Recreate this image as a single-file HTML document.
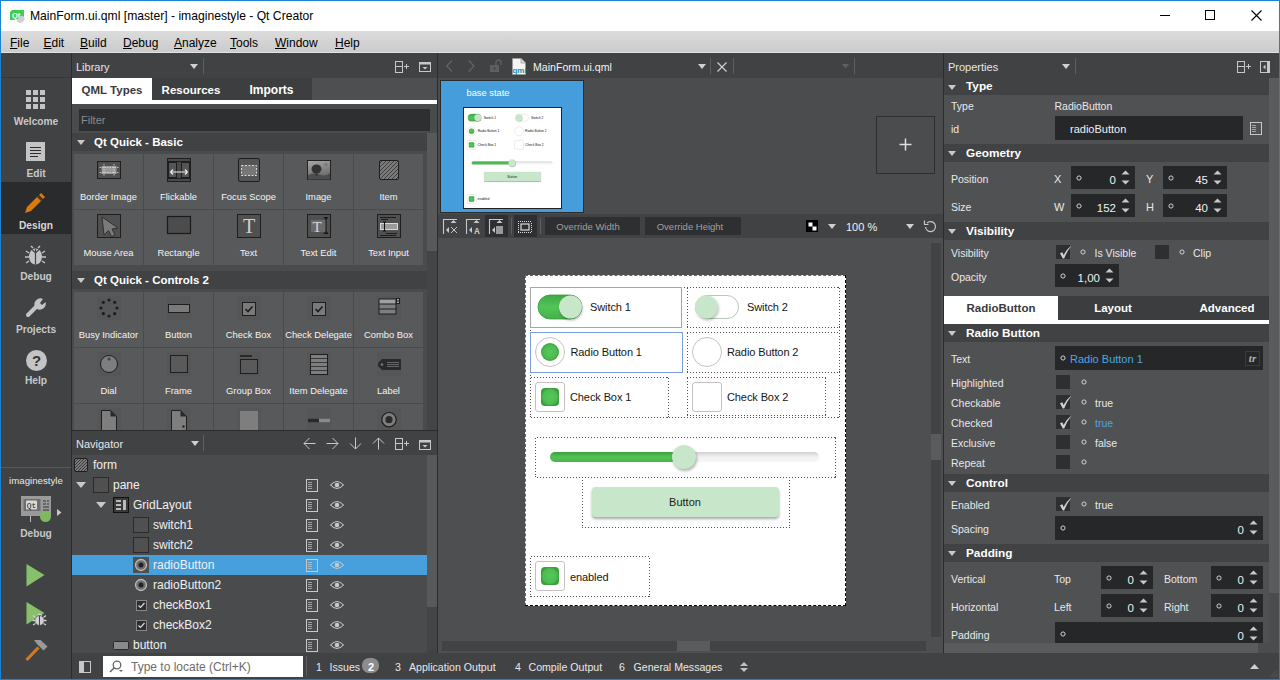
<!DOCTYPE html><html><head><meta charset="utf-8"><style>
*{margin:0;padding:0;box-sizing:border-box}
html,body{width:1280px;height:680px;overflow:hidden;background:#1883d7;font-family:"Liberation Sans",sans-serif;position:relative}
.a{position:absolute}
.t{position:absolute;white-space:nowrap;line-height:1;font-size:11px;color:#e6e6e6}
svg{position:absolute;overflow:visible}
</style></head><body><div class="a" style="left:1px;top:1px;width:1278px;height:30px;background:#fff"></div>
<div class="a" style="left:1px;top:31px;width:1278px;height:21px;background:linear-gradient(#dcdcdc,#cbcbcb)"></div>
<div class="a" style="left:1px;top:52px;width:1278px;height:1px;background:#e2e2e2"></div>
<div class="a" style="left:1px;top:53px;width:1278px;height:626px;background:#404244"></div>
<svg style="left:10px;top:9px;" width="16" height="15" viewBox="0 0 16 15"><path d="M0 3 L2 1 H14 V9 L12 11 H0 Z" fill="#41cd52"/><text x="2" y="9" font-size="7.5" font-family="Liberation Sans" fill="#fff" font-weight="bold">Qt</text><ellipse cx="11" cy="10.5" rx="4" ry="3" fill="#d0d0d0" transform="rotate(-45 11 10.5)"/></svg>
<div class="t" style="left:30px;top:9.72px;font-size:12.15px;color:#000">MainForm.ui.qml [master] - imaginestyle - Qt Creator</div>
<svg style="left:1160px;top:10px;" width="11" height="11" viewBox="0 0 11 11"><path d="M0 5.5 H10" stroke="#000" stroke-width="1"/></svg>
<svg style="left:1205px;top:10px;" width="11" height="11" viewBox="0 0 11 11"><rect x="0.5" y="0.5" width="9" height="9" fill="none" stroke="#000" stroke-width="1"/></svg>
<svg style="left:1251px;top:10px;" width="11" height="11" viewBox="0 0 11 11"><path d="M0.5 0.5 L10.5 10.5 M10.5 0.5 L0.5 10.5" stroke="#000" stroke-width="1.1"/></svg>
<div class="t" style="left:10px;top:36.84px;font-size:12px;color:#000"><u style="text-underline-offset:1px">F</u>ile</div>
<div class="t" style="left:43.5px;top:36.84px;font-size:12px;color:#000"><u style="text-underline-offset:1px">E</u>dit</div>
<div class="t" style="left:80px;top:36.84px;font-size:12px;color:#000"><u style="text-underline-offset:1px">B</u>uild</div>
<div class="t" style="left:123px;top:36.84px;font-size:12px;color:#000"><u style="text-underline-offset:1px">D</u>ebug</div>
<div class="t" style="left:174px;top:36.84px;font-size:12px;color:#000"><u style="text-underline-offset:1px">A</u>nalyze</div>
<div class="t" style="left:230px;top:36.84px;font-size:12px;color:#000"><u style="text-underline-offset:1px">T</u>ools</div>
<div class="t" style="left:275px;top:36.84px;font-size:12px;color:#000"><u style="text-underline-offset:1px">W</u>indow</div>
<div class="t" style="left:335px;top:36.84px;font-size:12px;color:#000"><u style="text-underline-offset:1px">H</u>elp</div>
<div class="a" style="left:1px;top:77px;width:70px;height:1px;background:#353638"></div>
<div class="a" style="left:71px;top:53px;width:1px;height:626px;background:#2b2c2e"></div>
<div class="a" style="left:1px;top:182px;width:70px;height:52px;background:#2a2b2d"></div>
<svg style="left:26px;top:90px;" width="19" height="19" viewBox="0 0 19 19"><rect x="0" y="0" width="5" height="5" fill="#c4c4c4"/><rect x="0" y="7" width="5" height="5" fill="#c4c4c4"/><rect x="0" y="14" width="5" height="5" fill="#c4c4c4"/><rect x="7" y="0" width="5" height="5" fill="#c4c4c4"/><rect x="7" y="7" width="5" height="5" fill="#c4c4c4"/><rect x="7" y="14" width="5" height="5" fill="#c4c4c4"/><rect x="14" y="0" width="5" height="5" fill="#c4c4c4"/><rect x="14" y="7" width="5" height="5" fill="#c4c4c4"/><rect x="14" y="14" width="5" height="5" fill="#c4c4c4"/></svg>
<div class="t" style="left:-164px;width:400px;text-align:center;top:116.87px;font-size:10.2px;font-weight:bold;color:#c8c8c8">Welcome</div>
<svg style="left:26px;top:142px;" width="19" height="19" viewBox="0 0 19 19"><rect width="19" height="19" fill="#c4c4c4"/><path d="M4 5.5H15M4 8.5H15M4 11.5H15M4 14.5H12" stroke="#2e2e2e" stroke-width="1"/></svg>
<div class="t" style="left:-164px;width:400px;text-align:center;top:169.37px;font-size:10.2px;font-weight:bold;color:#c8c8c8">Edit</div>
<svg style="left:24px;top:193px;" width="22" height="22" viewBox="0 0 22 22"><path d="M1 20 L3 14 L14 3 L18 7 L7 18 Z" fill="#d97b0e"/><path d="M15 2 L17 0 L21 4 L19 6 Z" fill="#d97b0e"/><path d="M13.5 3.5 L17.5 7.5" stroke="#2a2b2d" stroke-width="1.2"/></svg>
<div class="t" style="left:-164px;width:400px;text-align:center;top:220.87px;font-size:10.2px;font-weight:bold;color:#d8d8d8">Design</div>
<svg style="left:25px;top:245px;" width="21" height="20" viewBox="0 0 21 20"><ellipse cx="10.5" cy="11.5" rx="6.5" ry="8" fill="#c4c4c4"/><path d="M10.5 4 V19.5" stroke="#404244" stroke-width="1.2"/><path d="M7 4.5 L10.5 8 L14 4.5" stroke="#404244" stroke-width="1.2" fill="none"/><path d="M1 6 L4 8 M0 12 H4 M1 18 L4 16 M20 6 L17 8 M21 12 H17 M20 18 L17 16 M6 1 L8 3 M15 1 L13 3" stroke="#c4c4c4" stroke-width="1.4"/></svg>
<div class="t" style="left:-164px;width:400px;text-align:center;top:271.87px;font-size:10.2px;font-weight:bold;color:#c8c8c8">Debug</div>
<svg style="left:26px;top:298px;" width="20" height="19" viewBox="0 0 20 19"><path d="M2 17 L11 8" stroke="#c4c4c4" stroke-width="4" stroke-linecap="round"/><path d="M9 9 A6 6 0 0 1 17 1 L14 5 L16 7 L19.5 4 A6 6 0 0 1 11 11 Z" fill="#c4c4c4"/></svg>
<div class="t" style="left:-164px;width:400px;text-align:center;top:325.37px;font-size:10.2px;font-weight:bold;color:#c8c8c8">Projects</div>
<svg style="left:26px;top:350px;" width="21" height="21" viewBox="0 0 21 21"><circle cx="10.5" cy="10.5" r="10.5" fill="#c4c4c4"/><text x="10.5" y="16" text-anchor="middle" font-size="15" font-weight="bold" font-family="Liberation Sans" fill="#333">?</text></svg>
<div class="t" style="left:-164px;width:400px;text-align:center;top:375.87px;font-size:10.2px;font-weight:bold;color:#c8c8c8">Help</div>
<div class="a" style="left:1px;top:467px;width:70px;height:1px;background:#58595b"></div>
<div class="t" style="left:-164px;width:400px;text-align:center;top:475.79px;font-size:9.7px;color:#e8e8e8">imaginestyle</div>
<svg style="left:21px;top:496px;" width="31" height="26" viewBox="0 0 31 26"><rect x="0" y="0" width="30" height="20" fill="#9a9a9a"/><rect x="2.5" y="3" width="17" height="12" fill="#6e6e6e"/><rect x="5" y="4.5" width="11" height="9" fill="#d8d8d8" rx="1"/><text x="10.5" y="12" text-anchor="middle" font-size="8" font-family="Liberation Mono" fill="#222">Qt</text><path d="M22 5h3M26 5h2M22 8h3M26 8h2M22 11h6M22 14h6" stroke="#555" stroke-width="1.5"/><path d="M9.5 20 V26" stroke="#bbb" stroke-width="1"/><circle cx="24.5" cy="20.5" r="5.5" fill="#7fb860"/></svg>
<svg style="left:57px;top:509px;" width="5" height="7" viewBox="0 0 5 7"><path d="M0 0 L4.5 3.5 L0 7Z" fill="#c8c8c8"/></svg>
<div class="t" style="left:-164px;width:400px;text-align:center;top:528.87px;font-size:10.2px;font-weight:bold;color:#c8c8c8">Debug</div>
<svg style="left:26px;top:564px;" width="19" height="23" viewBox="0 0 19 23"><path d="M0.5 0 L18.5 11 L0.5 22.5Z" fill="#87c06a"/></svg>
<svg style="left:26px;top:602px;" width="22" height="24" viewBox="0 0 22 24"><path d="M0.5 0 L18.5 11 L0.5 22.5Z" fill="#87c06a"/><path d="M13.5 11.5 a3 3 0 0 1 3 2.5 h-6 a3 3 0 0 1 3 -2.5Z" fill="#d0d0d0"/><ellipse cx="13.5" cy="18.5" rx="4.8" ry="5" fill="#d0d0d0" stroke="#404244" stroke-width="0.8"/><path d="M13.5 14 V23.5" stroke="#404244" stroke-width="1"/><path d="M7 13.5 L9.5 15.5 M6.5 18.5 H9 M7 23 L9.5 21.5 M20 13.5 L17.5 15.5 M20.5 18.5 H18 M20 23 L17.5 21.5" stroke="#d0d0d0" stroke-width="1.3"/></svg>
<svg style="left:25px;top:639px;" width="24" height="23" viewBox="0 0 24 23"><path d="M1.5 21 L13.5 8.5" stroke="#d47a1e" stroke-width="3.2"/><path d="M9 1 L15.5 1 L22.5 7.5 L18.5 11.5 L12 5Z" fill="#9a9a9a"/></svg>
<div class="a" style="left:72px;top:53px;width:365px;height:25px;background:#404244"></div>
<div class="t" style="left:76px;top:61.69px;font-size:11px;">Library</div>
<svg style="left:190px;top:64px;" width="8" height="5" viewBox="0 0 8 5"><path d="M0 0H8L4 5Z" fill="#d0d0d0"/></svg>
<div class="a" style="left:203px;top:58px;width:1px;height:16px;background:#5e5f61"></div>
<svg style="left:395px;top:61px;" width="15" height="12" viewBox="0 0 15 12"><rect x="0.5" y="0.5" width="7" height="11" fill="none" stroke="#c8c8c8"/><path d="M0.5 5.5H7.5M9 5.5H14M11.5 3V8" stroke="#c8c8c8"/></svg>
<svg style="left:419px;top:62px;" width="12" height="10" viewBox="0 0 12 10"><rect x="0.5" y="0.5" width="11" height="9" fill="none" stroke="#c8c8c8"/><rect x="0" y="0" width="12" height="2.5" fill="#c8c8c8"/><path d="M3.5 5H8.5L6 7.5Z" fill="#c8c8c8"/></svg>
<div class="a" style="left:72px;top:78px;width:365px;height:22px;background:#3d3e40"></div>
<div class="a" style="left:312px;top:78px;width:125px;height:22px;background:#4e4f51"></div>
<div class="a" style="left:72px;top:78px;width:80px;height:22px;background:#fff"></div>
<div class="a" style="left:72px;top:100px;width:365px;height:4px;background:#fff"></div>
<div class="a" style="left:72px;top:104px;width:365px;height:327px;background:#4a4b4d"></div>
<div class="t" style="left:-88px;width:400px;text-align:center;top:84.77px;font-size:11.5px;font-weight:bold;color:#3a3a3a">QML Types</div>
<div class="t" style="left:-9px;width:400px;text-align:center;top:84.77px;font-size:11.5px;font-weight:bold;color:#fff">Resources</div>
<div class="t" style="left:71.5px;width:400px;text-align:center;top:84.34px;font-size:12px;font-weight:bold;color:#fff">Imports</div>
<div class="a" style="left:79px;top:109px;width:351px;height:22px;background:#2e2f30"></div>
<div class="t" style="left:81px;top:114.69px;font-size:11px;color:#8c8c8c">Filter</div>
<div class="a" style="left:427px;top:133px;width:10px;height:297px;background:#444547"></div>
<div class="a" style="left:427px;top:133px;width:10px;height:118px;background:#59595b"></div>
<div class="a" style="left:437px;top:53px;width:1px;height:600px;background:#2b2c2e"></div>
<div class="a" style="left:72px;top:133px;width:355px;height:18px;background:#404244"></div>
<svg style="left:77px;top:140px;" width="8" height="5" viewBox="0 0 8 5"><path d="M0 0H8L4 5Z" fill="#c8c8c8"/></svg>
<div class="t" style="left:94px;top:136.77px;font-size:11.5px;font-weight:bold;color:#fff">Qt Quick - Basic</div>
<div class="a" style="left:72px;top:271px;width:355px;height:18px;background:#404244"></div>
<svg style="left:77px;top:278px;" width="8" height="5" viewBox="0 0 8 5"><path d="M0 0H8L4 5Z" fill="#c8c8c8"/></svg>
<div class="t" style="left:94px;top:274.77px;font-size:11.5px;font-weight:bold;color:#fff">Qt Quick - Controls 2</div>
<div class="a" style="left:74px;top:154px;width:69px;height:55px;background:#58595b"></div>
<svg style="left:97px;top:161px;" width="24" height="18" viewBox="0 0 24 18"><rect x="0.5" y="0.5" width="23" height="17" fill="#505050" stroke="#1e1e1e"/><rect x="4.5" y="5" width="15" height="8" fill="#9a9a9a"/><path d="M7 3V15M17 3V15M2.5 6.5H21.5M2.5 11.5H21.5" stroke="#d8d8d8" stroke-width="0.8" stroke-dasharray="1.5 1"/></svg>
<div class="t" style="left:-91.5px;width:400px;text-align:center;top:191.54px;font-size:9.4px;color:#f4f4f4">Border Image</div>
<div class="a" style="left:144px;top:154px;width:69px;height:55px;background:#58595b"></div>
<svg style="left:167px;top:158px;" width="24" height="24" viewBox="0 0 24 24"><rect x="0.5" y="0.5" width="23" height="23" fill="#4a4a4a" stroke="#1e1e1e"/><path d="M0.5 3.5H23.5M0.5 20.5H23.5" stroke="#1e1e1e"/><rect x="1.5" y="4.5" width="8" height="15" fill="#555" stroke="#1e1e1e"/><rect x="14.5" y="4.5" width="8" height="15" fill="#555" stroke="#1e1e1e"/><path d="M3.5 14H20.5M3.5 14L6 11.5M3.5 14L6 16.5M20.5 14L18 11.5M20.5 14L18 16.5" stroke="#eee" stroke-width="1.2" fill="none"/></svg>
<div class="t" style="left:-21.5px;width:400px;text-align:center;top:191.54px;font-size:9.4px;color:#f4f4f4">Flickable</div>
<div class="a" style="left:214px;top:154px;width:69px;height:55px;background:#58595b"></div>
<svg style="left:238px;top:158px;" width="22" height="24" viewBox="0 0 22 24"><rect x="0.5" y="0.5" width="21" height="23" rx="1.5" fill="#555" stroke="#1e1e1e"/><rect x="3.5" y="7.5" width="15" height="10" fill="#777" stroke="#ddd" stroke-dasharray="2 1.5"/></svg>
<div class="t" style="left:48.5px;width:400px;text-align:center;top:191.54px;font-size:9.4px;color:#f4f4f4">Focus Scope</div>
<div class="a" style="left:284px;top:154px;width:69px;height:55px;background:#58595b"></div>
<svg style="left:307px;top:160px;" width="24" height="20" viewBox="0 0 24 20"><defs><linearGradient id="gimg" x1="0" y1="0" x2="0.3" y2="1"><stop offset="0" stop-color="#a8a8a8"/><stop offset="1" stop-color="#6a6a6a"/></linearGradient></defs><rect x="0.5" y="0.5" width="23" height="19" fill="url(#gimg)" stroke="#222"/><path d="M1 15 Q7 12 13 14.5 T23 13 V19.5 H1Z" fill="#4e4e4e"/><ellipse cx="9.5" cy="9" rx="5" ry="4.5" fill="#333"/><path d="M9.5 10V16" stroke="#333" stroke-width="1.5"/><circle cx="19" cy="4.5" r="1.6" fill="#777"/></svg>
<div class="t" style="left:118.5px;width:400px;text-align:center;top:191.54px;font-size:9.4px;color:#f4f4f4">Image</div>
<div class="a" style="left:354px;top:154px;width:69px;height:55px;background:#58595b"></div>
<svg style="left:379px;top:160px;" width="20" height="20" viewBox="0 0 20 20"><defs><clipPath id="ci"><rect x="1" y="1" width="18" height="18"/></clipPath></defs><rect x="0.5" y="0.5" width="19" height="19" rx="1.5" fill="#7a7a7a" stroke="#1e1e1e"/><g clip-path="url(#ci)"><path d="M-16 20 L4 0" stroke="#3e3e3e" stroke-width="1"/><path d="M-12 20 L8 0" stroke="#3e3e3e" stroke-width="1"/><path d="M-8 20 L12 0" stroke="#3e3e3e" stroke-width="1"/><path d="M-4 20 L16 0" stroke="#3e3e3e" stroke-width="1"/><path d="M0 20 L20 0" stroke="#3e3e3e" stroke-width="1"/><path d="M4 20 L24 0" stroke="#3e3e3e" stroke-width="1"/><path d="M8 20 L28 0" stroke="#3e3e3e" stroke-width="1"/><path d="M12 20 L32 0" stroke="#3e3e3e" stroke-width="1"/><path d="M16 20 L36 0" stroke="#3e3e3e" stroke-width="1"/></g></svg>
<div class="t" style="left:188.5px;width:400px;text-align:center;top:191.54px;font-size:9.4px;color:#f4f4f4">Item</div>
<div class="a" style="left:74px;top:210px;width:69px;height:55px;background:#58595b"></div>
<svg style="left:97px;top:214px;" width="24" height="24" viewBox="0 0 24 24"><rect x="0.5" y="0.5" width="23" height="23" fill="#505050" stroke="#1e1e1e"/><path d="M5 3 L21 14 L15 15 L18 21 L14.5 22.5 L11.5 16.5 L7 21 Z" fill="#7a7a7a" stroke="#2a2a2a" stroke-width="0.9"/></svg>
<div class="t" style="left:-91.5px;width:400px;text-align:center;top:247.54px;font-size:9.4px;color:#f4f4f4">Mouse Area</div>
<div class="a" style="left:144px;top:210px;width:69px;height:55px;background:#58595b"></div>
<svg style="left:167px;top:216px;" width="24" height="18" viewBox="0 0 24 18"><rect x="0.5" y="0.5" width="23" height="17" fill="#4c4c4c" stroke="#1a1a1a" stroke-width="1.2"/></svg>
<div class="t" style="left:-21.5px;width:400px;text-align:center;top:247.54px;font-size:9.4px;color:#f4f4f4">Rectangle</div>
<div class="a" style="left:214px;top:210px;width:69px;height:55px;background:#58595b"></div>
<svg style="left:237px;top:214px;" width="24" height="24" viewBox="0 0 24 24"><rect x="0.5" y="0.5" width="23" height="23" fill="#505050" stroke="#1e1e1e"/><text x="12" y="19" text-anchor="middle" font-size="20" font-family="Liberation Serif" fill="#d0d0d0">T</text></svg>
<div class="t" style="left:48.5px;width:400px;text-align:center;top:247.54px;font-size:9.4px;color:#f4f4f4">Text</div>
<div class="a" style="left:284px;top:210px;width:69px;height:55px;background:#58595b"></div>
<svg style="left:307px;top:214px;" width="24" height="24" viewBox="0 0 24 24"><rect x="0.5" y="0.5" width="23" height="23" fill="#505050" stroke="#1e1e1e"/><rect x="4" y="6" width="15" height="12" fill="#6a6a6a"/><text x="10" y="17.5" text-anchor="middle" font-size="15" font-family="Liberation Serif" fill="#d8d8d8">T</text><path d="M17 3.5H21M19 3.5V19.5M17 19.5H21M17 3.5L19 5.5L21 3.5M17 19.5L19 17.5L21 19.5" stroke="#111" stroke-width="0.9" fill="none"/></svg>
<div class="t" style="left:118.5px;width:400px;text-align:center;top:247.54px;font-size:9.4px;color:#f4f4f4">Text Edit</div>
<div class="a" style="left:354px;top:210px;width:69px;height:55px;background:#58595b"></div>
<svg style="left:377px;top:214px;" width="24" height="24" viewBox="0 0 24 24"><rect x="0.5" y="0.5" width="23" height="23" fill="#505050" stroke="#1e1e1e"/><path d="M3 3.5H19M4 5.5H11M9 19.5H20M3 21.5H19" stroke="#1e1e1e"/><rect x="3.5" y="9.5" width="17" height="6" fill="#9a9a9a" stroke="#d8d8d8"/><path d="M7.5 8V17M6 8H9M6 17H9" stroke="#111" stroke-width="1"/></svg>
<div class="t" style="left:188.5px;width:400px;text-align:center;top:247.54px;font-size:9.4px;color:#f4f4f4">Text Input</div>
<div class="a" style="left:74px;top:292px;width:69px;height:55px;background:#58595b"></div>
<div class="a" style="left:97px;top:296px;width:24px;height:24px;background:#555658"></div>
<svg style="left:97px;top:296px;" width="24" height="24" viewBox="0 0 24 24"><circle cx="20.00" cy="12.00" r="1.6" fill="#1e1e1e"/><circle cx="17.66" cy="17.66" r="1.6" fill="#1e1e1e"/><circle cx="12.00" cy="20.00" r="1.6" fill="#1e1e1e"/><circle cx="6.34" cy="17.66" r="1.6" fill="#1e1e1e"/><circle cx="4.00" cy="12.00" r="1.6" fill="#1e1e1e"/><circle cx="6.34" cy="6.34" r="1.6" fill="#1e1e1e"/><circle cx="12.00" cy="4.00" r="1.6" fill="#1e1e1e"/><circle cx="17.66" cy="6.34" r="1.6" fill="#1e1e1e"/></svg>
<div class="t" style="left:-91.5px;width:400px;text-align:center;top:329.54px;font-size:9.4px;color:#f4f4f4">Busy Indicator</div>
<div class="a" style="left:144px;top:292px;width:69px;height:55px;background:#58595b"></div>
<div class="a" style="left:167px;top:296px;width:24px;height:24px;background:#555658"></div>
<svg style="left:167px;top:296px;" width="24" height="24" viewBox="0 0 24 24"><rect x="1.5" y="8.5" width="21" height="8" fill="#7a7a7a" stroke="#1e1e1e"/></svg>
<div class="t" style="left:-21.5px;width:400px;text-align:center;top:329.54px;font-size:9.4px;color:#f4f4f4">Button</div>
<div class="a" style="left:214px;top:292px;width:69px;height:55px;background:#58595b"></div>
<div class="a" style="left:237px;top:296px;width:24px;height:24px;background:#555658"></div>
<svg style="left:237px;top:296px;" width="24" height="24" viewBox="0 0 24 24"><rect x="5.5" y="6.5" width="13" height="13" fill="#7a7a7a" stroke="#1e1e1e"/><path d="M8.5 13 L11 15.5 L15.5 10.5" stroke="#1e1e1e" stroke-width="1.7" fill="none"/></svg>
<div class="t" style="left:48.5px;width:400px;text-align:center;top:329.54px;font-size:9.4px;color:#f4f4f4">Check Box</div>
<div class="a" style="left:284px;top:292px;width:69px;height:55px;background:#58595b"></div>
<div class="a" style="left:307px;top:296px;width:24px;height:24px;background:#555658"></div>
<svg style="left:307px;top:296px;" width="24" height="24" viewBox="0 0 24 24"><rect x="5.5" y="6.5" width="13" height="13" fill="#7a7a7a" stroke="#1e1e1e"/><path d="M8.5 13 L11 15.5 L15.5 10.5" stroke="#1e1e1e" stroke-width="1.7" fill="none"/></svg>
<div class="t" style="left:118.5px;width:400px;text-align:center;top:329.54px;font-size:9.4px;color:#f4f4f4">Check Delegate</div>
<div class="a" style="left:354px;top:292px;width:69px;height:55px;background:#58595b"></div>
<div class="a" style="left:377px;top:296px;width:24px;height:24px;background:#555658"></div>
<svg style="left:377px;top:296px;" width="24" height="24" viewBox="0 0 24 24"><rect x="1.5" y="2.5" width="18" height="16" fill="#1e1e1e"/><rect x="2.5" y="3.5" width="16" height="4" fill="#a0a0a0"/><rect x="2.5" y="8.5" width="16" height="4" fill="#7e7e7e"/><rect x="2.5" y="13.5" width="16" height="4" fill="#7e7e7e"/><rect x="19" y="2" width="4" height="6" fill="#1e1e1e"/><rect x="20" y="3" width="2" height="1.5" fill="#aaa"/><rect x="20" y="5.5" width="2" height="1.5" fill="#aaa"/></svg>
<div class="t" style="left:188.5px;width:400px;text-align:center;top:329.54px;font-size:9.4px;color:#f4f4f4">Combo Box</div>
<div class="a" style="left:74px;top:348px;width:69px;height:55px;background:#58595b"></div>
<div class="a" style="left:97px;top:352px;width:24px;height:24px;background:#555658"></div>
<svg style="left:97px;top:352px;" width="24" height="24" viewBox="0 0 24 24"><circle cx="12" cy="12" r="8.5" fill="#7e7e7e" stroke="#1e1e1e"/><circle cx="12" cy="7" r="1.6" fill="#444"/></svg>
<div class="t" style="left:-91.5px;width:400px;text-align:center;top:385.54px;font-size:9.4px;color:#f4f4f4">Dial</div>
<div class="a" style="left:144px;top:348px;width:69px;height:55px;background:#58595b"></div>
<div class="a" style="left:167px;top:352px;width:24px;height:24px;background:#555658"></div>
<svg style="left:167px;top:352px;" width="24" height="24" viewBox="0 0 24 24"><rect x="3.5" y="3.5" width="17" height="17" fill="#5a5a5a" stroke="#1e1e1e"/></svg>
<div class="t" style="left:-21.5px;width:400px;text-align:center;top:385.54px;font-size:9.4px;color:#f4f4f4">Frame</div>
<div class="a" style="left:214px;top:348px;width:69px;height:55px;background:#58595b"></div>
<div class="a" style="left:237px;top:352px;width:24px;height:24px;background:#555658"></div>
<svg style="left:237px;top:352px;" width="24" height="24" viewBox="0 0 24 24"><rect x="3" y="3" width="12" height="2" fill="#2a2a2a"/><rect x="3.5" y="7.5" width="17" height="14" fill="#5a5a5a" stroke="#1e1e1e"/></svg>
<div class="t" style="left:48.5px;width:400px;text-align:center;top:385.54px;font-size:9.4px;color:#f4f4f4">Group Box</div>
<div class="a" style="left:284px;top:348px;width:69px;height:55px;background:#58595b"></div>
<div class="a" style="left:307px;top:352px;width:24px;height:24px;background:#555658"></div>
<svg style="left:307px;top:352px;" width="24" height="24" viewBox="0 0 24 24"><rect x="3.5" y="2.5" width="17" height="20" fill="#7e7e7e" stroke="#1e1e1e"/><path d="M4 6.5H20M4 10.5H20M4 14.5H20M4 18.5H20" stroke="#3a3a3a" stroke-width="1"/></svg>
<div class="t" style="left:118.5px;width:400px;text-align:center;top:385.54px;font-size:9.4px;color:#f4f4f4">Item Delegate</div>
<div class="a" style="left:354px;top:348px;width:69px;height:55px;background:#58595b"></div>
<div class="a" style="left:377px;top:352px;width:24px;height:24px;background:#555658"></div>
<svg style="left:377px;top:352px;" width="24" height="24" viewBox="0 0 24 24"><path d="M5 7 H24 V18 H5 L1 14 V11Z" fill="#2a2a2a"/><circle cx="5" cy="12.5" r="1.3" fill="#777"/><path d="M10 10.5H22M10 12.5H22M10 14.5H22" stroke="#777" stroke-width="0.8"/></svg>
<div class="t" style="left:188.5px;width:400px;text-align:center;top:385.54px;font-size:9.4px;color:#f4f4f4">Label</div>
<div class="a" style="left:74px;top:404px;width:69px;height:26px;background:#58595b"></div>
<div class="a" style="left:97px;top:408px;width:24px;height:24px;background:#555658"></div>
<svg style="left:97px;top:408px;" width="24" height="24" viewBox="0 0 24 24"><path d="M4.5 2.5 H13.5 L19.5 8.5 V30 H4.5Z" fill="#7e7e7e" stroke="#1e1e1e"/><path d="M13.5 2 V8.5 H20Z" fill="#2a2a2a"/></svg>
<div class="a" style="left:144px;top:404px;width:69px;height:26px;background:#58595b"></div>
<div class="a" style="left:167px;top:408px;width:24px;height:24px;background:#555658"></div>
<svg style="left:167px;top:408px;" width="24" height="24" viewBox="0 0 24 24"><path d="M4.5 2.5 H13.5 L19.5 8.5 V30 H4.5Z" fill="#7e7e7e" stroke="#1e1e1e"/><path d="M13.5 2 V8.5 H20Z" fill="#2a2a2a"/><rect x="15.5" y="17.5" width="2" height="2" fill="#111"/></svg>
<div class="a" style="left:214px;top:404px;width:69px;height:26px;background:#58595b"></div>
<div class="a" style="left:237px;top:408px;width:24px;height:24px;background:#555658"></div>
<svg style="left:237px;top:408px;" width="24" height="24" viewBox="0 0 24 24"><rect x="3" y="3" width="18" height="19" fill="#7e7e7e"/></svg>
<div class="a" style="left:284px;top:404px;width:69px;height:26px;background:#58595b"></div>
<div class="a" style="left:307px;top:408px;width:24px;height:24px;background:#555658"></div>
<svg style="left:307px;top:408px;" width="24" height="24" viewBox="0 0 24 24"><rect x="1" y="10.8" width="11" height="3.4" fill="#2a2a2a"/><rect x="12" y="10.8" width="11" height="3.4" fill="#8a8a8a"/></svg>
<div class="a" style="left:354px;top:404px;width:69px;height:26px;background:#58595b"></div>
<div class="a" style="left:377px;top:408px;width:24px;height:24px;background:#555658"></div>
<svg style="left:377px;top:408px;" width="24" height="24" viewBox="0 0 24 24"><circle cx="12" cy="11.7" r="7.2" fill="#7e7e7e" stroke="#1e1e1e" stroke-width="1.2"/><circle cx="12" cy="11.7" r="3.6" fill="#2a2a2a"/></svg>
<div class="a" style="left:72px;top:430px;width:365px;height:1px;background:#2b2c2e"></div>
<div class="a" style="left:72px;top:431px;width:365px;height:24px;background:#404244"></div>
<div class="t" style="left:76px;top:438.69px;font-size:11px;">Navigator</div>
<svg style="left:191px;top:441px;" width="8" height="5" viewBox="0 0 8 5"><path d="M0 0H8L4 5Z" fill="#d0d0d0"/></svg>
<div class="a" style="left:203px;top:435px;width:1px;height:16px;background:#5e5f61"></div>
<svg style="left:303px;top:437px;" width="13" height="13" viewBox="0 0 13 13"><path d="M1 6.5H12.5M6.5 1L1 6.5L6.5 12" stroke="#c8c8c8" stroke-width="1" fill="none"/></svg>
<svg style="left:326px;top:437px;" width="13" height="13" viewBox="0 0 13 13"><path d="M0.5 6.5H12M6.5 1L12 6.5L6.5 12" stroke="#c8c8c8" stroke-width="1" fill="none"/></svg>
<svg style="left:349px;top:437px;" width="13" height="13" viewBox="0 0 13 13"><path d="M6.5 0.5V12M1 6.5L6.5 12L12 6.5" stroke="#c8c8c8" stroke-width="1" fill="none"/></svg>
<svg style="left:372px;top:437px;" width="13" height="13" viewBox="0 0 13 13"><path d="M6.5 1V12.5M1 6.5L6.5 1L12 6.5" stroke="#c8c8c8" stroke-width="1" fill="none"/></svg>
<svg style="left:395px;top:438px;" width="15" height="12" viewBox="0 0 15 12"><rect x="0.5" y="0.5" width="7" height="11" fill="none" stroke="#c8c8c8"/><path d="M0.5 5.5H7.5M9 5.5H14M11.5 3V8" stroke="#c8c8c8"/></svg>
<svg style="left:419px;top:440px;" width="12" height="10" viewBox="0 0 12 10"><rect x="0.5" y="0.5" width="11" height="9" fill="none" stroke="#c8c8c8"/><rect x="0" y="0" width="12" height="2.5" fill="#c8c8c8"/><path d="M3.5 5H8.5L6 7.5Z" fill="#c8c8c8"/></svg>
<div class="a" style="left:72px;top:455px;width:355px;height:198px;background:#4a4b4d"></div>
<div class="a" style="left:427px;top:455px;width:10px;height:195px;background:#444547"></div>
<div class="a" style="left:427px;top:455px;width:10px;height:152px;background:#58595b"></div>
<div class="a" style="left:72px;top:555px;width:355px;height:20px;background:#479fdc"></div>
<svg style="left:74px;top:458px;" width="14" height="14" viewBox="0 0 14 14"><defs><clipPath id="cf"><rect x="1" y="1" width="12" height="12"/></clipPath></defs><rect x="0.5" y="0.5" width="13" height="13" rx="1.5" fill="#7a7a7a" stroke="#1e1e1e"/><g clip-path="url(#cf)"><path d="M-12 14 L2 0" stroke="#3a3a3a" stroke-width="1"/><path d="M-9 14 L5 0" stroke="#3a3a3a" stroke-width="1"/><path d="M-6 14 L8 0" stroke="#3a3a3a" stroke-width="1"/><path d="M-3 14 L11 0" stroke="#3a3a3a" stroke-width="1"/><path d="M0 14 L14 0" stroke="#3a3a3a" stroke-width="1"/><path d="M3 14 L17 0" stroke="#3a3a3a" stroke-width="1"/><path d="M6 14 L20 0" stroke="#3a3a3a" stroke-width="1"/><path d="M9 14 L23 0" stroke="#3a3a3a" stroke-width="1"/><path d="M12 14 L26 0" stroke="#3a3a3a" stroke-width="1"/></g></svg>
<div class="t" style="left:93px;top:459.34px;font-size:12px;color:#f0f0f0">form</div>
<svg style="left:76px;top:482px;" width="10" height="6" viewBox="0 0 10 6"><path d="M0 0H10L5 6Z" fill="#c8c8c8"/></svg>
<svg style="left:93px;top:477px;" width="16" height="16" viewBox="0 0 16 16"><rect x="0.5" y="0.5" width="15" height="15" fill="#505050" stroke="#2a2a2a"/></svg>
<svg style="left:93px;top:477px;" width="16" height="16" viewBox="0 0 16 16"><rect x="0.5" y="0.5" width="15" height="15" fill="#505050" stroke="#2a2a2a"/></svg>
<div class="t" style="left:113px;top:479.34px;font-size:12px;color:#f0f0f0">pane</div>
<svg style="left:306px;top:479px;" width="12" height="13" viewBox="0 0 12 13"><rect x="0.5" y="0.5" width="11" height="12" fill="none" stroke="#c8c8c8"/><path d="M2 3.5H6M2 5.5H6M2 7.5H6M2 9.5H6" stroke="#c8c8c8" stroke-width="0.7"/></svg>
<svg style="left:330px;top:480px;" width="14" height="10" viewBox="0 0 14 10"><path d="M0.5 5 Q7 -2 13.5 5 Q7 12 0.5 5Z" fill="none" stroke="#c8c8c8" stroke-width="1.1"/><circle cx="7" cy="5" r="2.3" fill="#c8c8c8"/></svg>
<svg style="left:96px;top:502px;" width="10" height="6" viewBox="0 0 10 6"><path d="M0 0H10L5 6Z" fill="#c8c8c8"/></svg>
<svg style="left:113px;top:497px;" width="16" height="16" viewBox="0 0 16 16"><rect x="0.5" y="0.5" width="15" height="15" fill="#3a3a3a" stroke="#111"/><rect x="3" y="3" width="5" height="2" fill="#bbb"/><rect x="3" y="7" width="5" height="2" fill="#bbb"/><rect x="3" y="11" width="5" height="2" fill="#bbb"/><rect x="10" y="3" width="3" height="10" fill="#bbb"/></svg>
<div class="t" style="left:133px;top:499.34px;font-size:12px;color:#f0f0f0">GridLayout</div>
<svg style="left:306px;top:499px;" width="12" height="13" viewBox="0 0 12 13"><rect x="0.5" y="0.5" width="11" height="12" fill="none" stroke="#c8c8c8"/><path d="M2 3.5H6M2 5.5H6M2 7.5H6M2 9.5H6" stroke="#c8c8c8" stroke-width="0.7"/></svg>
<svg style="left:330px;top:500px;" width="14" height="10" viewBox="0 0 14 10"><path d="M0.5 5 Q7 -2 13.5 5 Q7 12 0.5 5Z" fill="none" stroke="#c8c8c8" stroke-width="1.1"/><circle cx="7" cy="5" r="2.3" fill="#c8c8c8"/></svg>
<svg style="left:133px;top:517px;" width="16" height="16" viewBox="0 0 16 16"><rect x="0.5" y="0.5" width="15" height="15" fill="#505050" stroke="#2a2a2a"/></svg>
<div class="t" style="left:153px;top:519.34px;font-size:12px;color:#f0f0f0">switch1</div>
<svg style="left:306px;top:519px;" width="12" height="13" viewBox="0 0 12 13"><rect x="0.5" y="0.5" width="11" height="12" fill="none" stroke="#c8c8c8"/><path d="M2 3.5H6M2 5.5H6M2 7.5H6M2 9.5H6" stroke="#c8c8c8" stroke-width="0.7"/></svg>
<svg style="left:330px;top:520px;" width="14" height="10" viewBox="0 0 14 10"><path d="M0.5 5 Q7 -2 13.5 5 Q7 12 0.5 5Z" fill="none" stroke="#c8c8c8" stroke-width="1.1"/><circle cx="7" cy="5" r="2.3" fill="#c8c8c8"/></svg>
<svg style="left:133px;top:537px;" width="16" height="16" viewBox="0 0 16 16"><rect x="0.5" y="0.5" width="15" height="15" fill="#505050" stroke="#2a2a2a"/></svg>
<div class="t" style="left:153px;top:539.34px;font-size:12px;color:#f0f0f0">switch2</div>
<svg style="left:306px;top:539px;" width="12" height="13" viewBox="0 0 12 13"><rect x="0.5" y="0.5" width="11" height="12" fill="none" stroke="#c8c8c8"/><path d="M2 3.5H6M2 5.5H6M2 7.5H6M2 9.5H6" stroke="#c8c8c8" stroke-width="0.7"/></svg>
<svg style="left:330px;top:540px;" width="14" height="10" viewBox="0 0 14 10"><path d="M0.5 5 Q7 -2 13.5 5 Q7 12 0.5 5Z" fill="none" stroke="#c8c8c8" stroke-width="1.1"/><circle cx="7" cy="5" r="2.3" fill="#c8c8c8"/></svg>
<svg style="left:133px;top:557px;" width="16" height="16" viewBox="0 0 16 16"><rect x="0" y="0" width="16" height="16" fill="#505050"/><circle cx="8" cy="8" r="5.5" fill="#707070" stroke="#bbb" stroke-width="1.3"/><circle cx="8" cy="8" r="2.5" fill="#222"/></svg>
<div class="t" style="left:153px;top:559.34px;font-size:12px;color:#f0f0f0">radioButton</div>
<svg style="left:306px;top:559px;" width="12" height="13" viewBox="0 0 12 13"><rect x="0.5" y="0.5" width="11" height="12" fill="none" stroke="#c8c8c8"/><path d="M2 3.5H6M2 5.5H6M2 7.5H6M2 9.5H6" stroke="#c8c8c8" stroke-width="0.7"/></svg>
<svg style="left:330px;top:560px;" width="14" height="10" viewBox="0 0 14 10"><path d="M0.5 5 Q7 -2 13.5 5 Q7 12 0.5 5Z" fill="none" stroke="#c8c8c8" stroke-width="1.1"/><circle cx="7" cy="5" r="2.3" fill="#c8c8c8"/></svg>
<svg style="left:133px;top:577px;" width="16" height="16" viewBox="0 0 16 16"><circle cx="8" cy="8" r="5.5" fill="#707070" stroke="#bbb" stroke-width="1.3"/><circle cx="8" cy="8" r="2.5" fill="#222"/></svg>
<div class="t" style="left:153px;top:579.34px;font-size:12px;color:#f0f0f0">radioButton2</div>
<svg style="left:306px;top:579px;" width="12" height="13" viewBox="0 0 12 13"><rect x="0.5" y="0.5" width="11" height="12" fill="none" stroke="#c8c8c8"/><path d="M2 3.5H6M2 5.5H6M2 7.5H6M2 9.5H6" stroke="#c8c8c8" stroke-width="0.7"/></svg>
<svg style="left:330px;top:580px;" width="14" height="10" viewBox="0 0 14 10"><path d="M0.5 5 Q7 -2 13.5 5 Q7 12 0.5 5Z" fill="none" stroke="#c8c8c8" stroke-width="1.1"/><circle cx="7" cy="5" r="2.3" fill="#c8c8c8"/></svg>
<svg style="left:136px;top:600px;" width="11" height="11" viewBox="0 0 11 11"><rect x="0.5" y="0.5" width="10" height="10" fill="#2e2e2e" stroke="#888"/><path d="M2.5 5.5L4.5 7.5L8.5 3" stroke="#ddd" stroke-width="1.2" fill="none"/></svg>
<div class="t" style="left:153px;top:599.34px;font-size:12px;color:#f0f0f0">checkBox1</div>
<svg style="left:306px;top:599px;" width="12" height="13" viewBox="0 0 12 13"><rect x="0.5" y="0.5" width="11" height="12" fill="none" stroke="#c8c8c8"/><path d="M2 3.5H6M2 5.5H6M2 7.5H6M2 9.5H6" stroke="#c8c8c8" stroke-width="0.7"/></svg>
<svg style="left:330px;top:600px;" width="14" height="10" viewBox="0 0 14 10"><path d="M0.5 5 Q7 -2 13.5 5 Q7 12 0.5 5Z" fill="none" stroke="#c8c8c8" stroke-width="1.1"/><circle cx="7" cy="5" r="2.3" fill="#c8c8c8"/></svg>
<svg style="left:136px;top:620px;" width="11" height="11" viewBox="0 0 11 11"><rect x="0.5" y="0.5" width="10" height="10" fill="#2e2e2e" stroke="#888"/><path d="M2.5 5.5L4.5 7.5L8.5 3" stroke="#ddd" stroke-width="1.2" fill="none"/></svg>
<div class="t" style="left:153px;top:619.34px;font-size:12px;color:#f0f0f0">checkBox2</div>
<svg style="left:306px;top:619px;" width="12" height="13" viewBox="0 0 12 13"><rect x="0.5" y="0.5" width="11" height="12" fill="none" stroke="#c8c8c8"/><path d="M2 3.5H6M2 5.5H6M2 7.5H6M2 9.5H6" stroke="#c8c8c8" stroke-width="0.7"/></svg>
<svg style="left:330px;top:620px;" width="14" height="10" viewBox="0 0 14 10"><path d="M0.5 5 Q7 -2 13.5 5 Q7 12 0.5 5Z" fill="none" stroke="#c8c8c8" stroke-width="1.1"/><circle cx="7" cy="5" r="2.3" fill="#c8c8c8"/></svg>
<svg style="left:113px;top:641px;" width="16" height="9" viewBox="0 0 16 9"><rect x="0.5" y="0.5" width="15" height="8" rx="1" fill="#8a8a8a" stroke="#2a2a2a"/></svg>
<div class="t" style="left:133px;top:639.34px;font-size:12px;color:#f0f0f0">button</div>
<svg style="left:306px;top:639px;" width="12" height="13" viewBox="0 0 12 13"><rect x="0.5" y="0.5" width="11" height="12" fill="none" stroke="#c8c8c8"/><path d="M2 3.5H6M2 5.5H6M2 7.5H6M2 9.5H6" stroke="#c8c8c8" stroke-width="0.7"/></svg>
<svg style="left:330px;top:640px;" width="14" height="10" viewBox="0 0 14 10"><path d="M0.5 5 Q7 -2 13.5 5 Q7 12 0.5 5Z" fill="none" stroke="#c8c8c8" stroke-width="1.1"/><circle cx="7" cy="5" r="2.3" fill="#c8c8c8"/></svg>
<div class="a" style="left:438px;top:53px;width:505px;height:25px;background:#404244"></div>
<svg style="left:446px;top:60px;" width="7" height="12" viewBox="0 0 7 12"><path d="M6 0.5L0.8 6L6 11.5" stroke="#666" stroke-width="1.1" fill="none"/></svg>
<svg style="left:468px;top:60px;" width="7" height="12" viewBox="0 0 7 12"><path d="M0.8 0.5L6 6L0.8 11.5" stroke="#666" stroke-width="1.1" fill="none"/></svg>
<svg style="left:490px;top:59px;" width="13" height="13" viewBox="0 0 13 13"><rect x="0" y="6" width="9" height="7" fill="#5e5f61"/><path d="M6 6V3.5A2.5 2.5 0 0 1 11 3.5V6" stroke="#5e5f61" stroke-width="1.5" fill="none"/><rect x="3.5" y="8.5" width="2" height="2" fill="#404244"/></svg>
<svg style="left:512px;top:58px;" width="15" height="17" viewBox="0 0 15 17"><path d="M0.5 0.5H9L13.5 5V16.5H0.5Z" fill="#f4f4f4" stroke="#999" stroke-width="0.8"/><path d="M9 0.5V5H13.5" fill="#ddd" stroke="#999" stroke-width="0.8"/><text x="7.5" y="14.5" text-anchor="middle" font-size="8" font-weight="bold" font-family="Liberation Sans" fill="#1a8fb0">qml</text></svg>
<div class="t" style="left:533px;top:62.03px;font-size:10.6px;color:#f4f4f4">MainForm.ui.qml</div>
<svg style="left:698px;top:64px;" width="8" height="5" viewBox="0 0 8 5"><path d="M0 0H8L4 5Z" fill="#d0d0d0"/></svg>
<div class="a" style="left:710px;top:58px;width:1px;height:16px;background:#5e5f61"></div>
<svg style="left:717px;top:62px;" width="10" height="10" viewBox="0 0 10 10"><path d="M0.5 0.5L9.5 9.5M9.5 0.5L0.5 9.5" stroke="#d0d0d0" stroke-width="1.2"/></svg>
<div class="a" style="left:733px;top:58px;width:1px;height:16px;background:#5e5f61"></div>
<svg style="left:842px;top:64px;" width="7" height="5" viewBox="0 0 7 5"><path d="M0 0H7L3.5 4.5Z" fill="#606163"/></svg>
<div class="a" style="left:854px;top:58px;width:1px;height:16px;background:#5e5f61"></div>
<div class="a" style="left:438px;top:78px;width:505px;height:136px;background:#4b4c4e"></div>
<div class="a" style="left:440px;top:80px;width:144px;height:133px;background:#2a2b2c"></div>
<div class="a" style="left:441px;top:81px;width:142px;height:131px;background:#459edb"></div>
<div class="t" style="left:466.5px;top:89.13px;font-size:9.3px;color:#fff">base state</div>
<div class="a" style="left:463px;top:107px;width:99px;height:102px;background:#222"></div>
<div class="a" style="left:464px;top:108px;width:97px;height:100px;background:#fff"></div>
<div class="a" style="left:464px;top:108px;width:97px;height:100px;overflow:hidden"><div class="a" style="left:0;top:0;width:1280px;height:680px;transform-origin:0 0;transform:scale(0.3022) translate(-525px,-275px)"><div class="a" style="left:530px;top:287px;width:152px;height:41px;background:#fff"></div>
<svg style="left:537px;top:294px;" width="48" height="28" viewBox="0 0 48 28"><defs><linearGradient id="gs" x1="0" y1="0" x2="0" y2="1"><stop offset="0" stop-color="#3fa845"/><stop offset="0.5" stop-color="#52c558"/><stop offset="1" stop-color="#45b04a"/></linearGradient><filter id="sh" x="-50%" y="-50%" width="200%" height="200%"><feGaussianBlur stdDeviation="1.5"/></filter></defs><rect x="1" y="1" width="44" height="24" rx="12" fill="url(#gs)" stroke="#3a9a3f" stroke-width="0.8"/><circle cx="34" cy="15" r="11" fill="#000" opacity="0.35" filter="url(#sh)"/><circle cx="33.5" cy="13" r="11.5" fill="#c8e6c9"/></svg>
<div class="t" style="left:590px;top:301.69px;font-size:11px;font-size:11px;color:#151515;letter-spacing:-0.1px">Switch 1</div>
<svg style="left:694px;top:294px;" width="48" height="28" viewBox="0 0 48 28"><rect x="1.5" y="1.5" width="43" height="23" rx="11.5" fill="#fff" stroke="#b8c8b8" stroke-width="1"/><circle cx="13.5" cy="15" r="11" fill="#000" opacity="0.3" filter="url(#sh)"/><circle cx="12.5" cy="13" r="11.5" fill="#c8e6c9"/></svg>
<div class="t" style="left:747px;top:301.69px;font-size:11px;font-size:11px;color:#151515;letter-spacing:-0.1px">Switch 2</div>
<div class="a" style="left:530px;top:332px;width:153px;height:41px;background:#fff"></div>
<svg style="left:534px;top:336px;" width="32" height="32" viewBox="0 0 32 32"><defs><radialGradient id="gr"><stop offset="0" stop-color="#55c95a"/><stop offset="0.75" stop-color="#4cbb50"/><stop offset="1" stop-color="#3a9e3e"/></radialGradient></defs><circle cx="16" cy="16" r="14.5" fill="#fff" stroke="#c8c0c0" stroke-width="1"/><circle cx="16" cy="16" r="9" fill="url(#gr)"/></svg>
<div class="t" style="left:570.5px;top:346.69px;font-size:11px;font-size:11px;color:#151515;letter-spacing:-0.1px">Radio Button 1</div>
<svg style="left:691px;top:336px;" width="32" height="32" viewBox="0 0 32 32"><circle cx="16" cy="16" r="14.5" fill="#fff" stroke="#c8c0c0" stroke-width="1"/></svg>
<div class="t" style="left:727px;top:346.69px;font-size:11px;font-size:11px;color:#151515;letter-spacing:-0.1px">Radio Button 2</div>
<svg style="left:535px;top:382px;" width="31" height="31" viewBox="0 0 31 31"><defs><radialGradient id="gc"><stop offset="0" stop-color="#55c95a"/><stop offset="0.8" stop-color="#4cbb50"/><stop offset="1" stop-color="#3a9e3e"/></radialGradient></defs><rect x="0.5" y="0.5" width="29" height="29" rx="2.5" fill="#fff" stroke="#c8c0c0"/><rect x="6" y="6" width="18" height="18" rx="4" fill="url(#gc)"/></svg>
<div class="t" style="left:570px;top:391.69px;font-size:11px;font-size:11px;color:#151515;letter-spacing:-0.1px">Check Box 1</div>
<svg style="left:692px;top:382px;" width="31" height="31" viewBox="0 0 31 31"><rect x="0.5" y="0.5" width="29" height="29" rx="2.5" fill="#fff" stroke="#c8c0c0"/></svg>
<div class="t" style="left:727px;top:391.69px;font-size:11px;font-size:11px;color:#151515;letter-spacing:-0.1px">Check Box 2</div>
<svg style="left:548px;top:443px;" width="275" height="30" viewBox="0 0 275 30"><defs><linearGradient id="gt" x1="0" y1="0" x2="0" y2="1"><stop offset="0" stop-color="#3a9e3f"/><stop offset="0.5" stop-color="#52c357"/><stop offset="1" stop-color="#4ab24e"/></linearGradient><linearGradient id="gg" x1="0" y1="0" x2="0" y2="1"><stop offset="0" stop-color="#cfcfcf"/><stop offset="0.5" stop-color="#f2f2f2"/><stop offset="1" stop-color="#f6f6f6"/></linearGradient></defs><rect x="2" y="9" width="269" height="10" rx="5" fill="url(#gg)"/><rect x="2" y="9" width="134" height="10" rx="5" fill="url(#gt)"/><circle cx="137" cy="16" r="12" fill="#000" opacity="0.3" filter="url(#sh)"/><circle cx="136" cy="14" r="12" fill="#c8e6c9"/></svg>
<div class="a" style="left:592px;top:487px;width:187px;height:30px;background:#c8e6c9;border-radius:4px;box-shadow:0 2px 3px rgba(0,0,0,0.35)"></div>
<div class="t" style="left:485px;width:400px;text-align:center;top:496.69px;font-size:11px;font-size:11px;color:#1a1a1a">Button</div>
<svg style="left:535px;top:561px;" width="31" height="31" viewBox="0 0 31 31"><rect x="0.5" y="0.5" width="29" height="29" rx="2.5" fill="#fff" stroke="#c8c0c0"/><rect x="6" y="6" width="18" height="18" rx="4" fill="url(#gc)"/></svg>
<div class="t" style="left:570px;top:571.69px;font-size:11px;font-size:11px;color:#151515;letter-spacing:-0.1px">enabled</div></div></div>
<div class="a" style="left:876px;top:116px;width:59px;height:58px;background:#4b4c4e;border:1px solid #2e2f30"></div>
<svg style="left:899px;top:138px;" width="13" height="13" viewBox="0 0 13 13"><path d="M6.5 0.5V12.5M0.5 6.5H12.5" stroke="#e0e0e0" stroke-width="1.5"/></svg>
<div class="a" style="left:438px;top:214px;width:505px;height:24px;background:#404244"></div>
<svg style="left:443px;top:219px;" width="15" height="15" viewBox="0 0 15 15"><path d="M0.5 15V0.5H14" stroke="#c8c8c8" stroke-width="1.1" fill="none"/><path d="M7.5 4H13.5L10.5 1Z" fill="#c8c8c8"/><path d="M6 8L3 11L6 14Z" fill="#c8c8c8"/><path d="M8 8L14 14M14 8L8 14" stroke="#c8c8c8" stroke-width="1"/></svg>
<svg style="left:466px;top:219px;" width="15" height="15" viewBox="0 0 15 15"><path d="M0.5 15V0.5H14" stroke="#c8c8c8" stroke-width="1.1" fill="none"/><path d="M7.5 4H13.5L10.5 1Z" fill="#c8c8c8"/><path d="M6 8L3 11L6 14Z" fill="#c8c8c8"/><text x="11" y="14.5" text-anchor="middle" font-size="9" font-weight="bold" font-family="Liberation Mono" fill="#c8c8c8">A</text></svg>
<div class="a" style="left:485px;top:215px;width:23px;height:22px;background:#2e2f30"></div>
<svg style="left:489px;top:219px;" width="15" height="15" viewBox="0 0 15 15"><path d="M0.5 15V0.5H14" stroke="#c8c8c8" stroke-width="1.1" fill="none"/><path d="M7.5 4H13.5L10.5 1Z" fill="#c8c8c8"/><path d="M6 8L3 11L6 14Z" fill="#c8c8c8"/><rect x="7" y="7" width="7" height="8" fill="#999"/></svg>
<div class="a" style="left:511px;top:218px;width:1px;height:16px;background:#5e5f61"></div>
<div class="a" style="left:514px;top:215px;width:23px;height:22px;background:#2e2f30"></div>
<svg style="left:518px;top:221px;" width="14" height="12" viewBox="0 0 14 12"><rect x="0" y="0" width="1" height="1" fill="#ddd"/><rect x="0" y="11" width="1" height="1" fill="#ddd"/><rect x="2" y="0" width="1" height="1" fill="#ddd"/><rect x="2" y="11" width="1" height="1" fill="#ddd"/><rect x="4" y="0" width="1" height="1" fill="#ddd"/><rect x="4" y="11" width="1" height="1" fill="#ddd"/><rect x="6" y="0" width="1" height="1" fill="#ddd"/><rect x="6" y="11" width="1" height="1" fill="#ddd"/><rect x="8" y="0" width="1" height="1" fill="#ddd"/><rect x="8" y="11" width="1" height="1" fill="#ddd"/><rect x="10" y="0" width="1" height="1" fill="#ddd"/><rect x="10" y="11" width="1" height="1" fill="#ddd"/><rect x="12" y="0" width="1" height="1" fill="#ddd"/><rect x="12" y="11" width="1" height="1" fill="#ddd"/><rect x="0" y="2" width="1" height="1" fill="#ddd"/><rect x="13" y="2" width="1" height="1" fill="#ddd"/><rect x="0" y="4" width="1" height="1" fill="#ddd"/><rect x="13" y="4" width="1" height="1" fill="#ddd"/><rect x="0" y="6" width="1" height="1" fill="#ddd"/><rect x="13" y="6" width="1" height="1" fill="#ddd"/><rect x="0" y="8" width="1" height="1" fill="#ddd"/><rect x="13" y="8" width="1" height="1" fill="#ddd"/><rect x="0" y="10" width="1" height="1" fill="#ddd"/><rect x="13" y="10" width="1" height="1" fill="#ddd"/><rect x="3" y="3" width="8" height="6" fill="none" stroke="#ddd" stroke-width="1.2"/></svg>
<div class="a" style="left:540px;top:218px;width:1px;height:16px;background:#5e5f61"></div>
<div class="a" style="left:545px;top:217px;width:95px;height:18px;background:#2e2f30"></div>
<div class="t" style="left:388px;width:400px;text-align:center;top:221.96px;font-size:9.5px;color:#a0a0a0">Override Width</div>
<div class="a" style="left:645px;top:217px;width:96px;height:18px;background:#2e2f30"></div>
<div class="t" style="left:490px;width:400px;text-align:center;top:221.96px;font-size:9.5px;color:#a0a0a0">Override Height</div>
<svg style="left:806px;top:220px;" width="12" height="12" viewBox="0 0 12 12"><rect width="12" height="12" fill="#000"/><rect x="2.5" y="2.5" width="4" height="4" fill="#fff"/><rect x="6.5" y="6.5" width="4" height="4" fill="#fff"/></svg>
<svg style="left:828px;top:224px;" width="8" height="5" viewBox="0 0 8 5"><path d="M0 0H8L4 5Z" fill="#d0d0d0"/></svg>
<div class="t" style="left:846px;top:221.69px;font-size:11px;color:#f0f0f0">100 %</div>
<svg style="left:906px;top:224px;" width="8" height="5" viewBox="0 0 8 5"><path d="M0 0H8L4 5Z" fill="#d0d0d0"/></svg>
<svg style="left:924px;top:220px;" width="12" height="12" viewBox="0 0 12 12"><path d="M3 3A5 5 0 1 1 1.5 7" stroke="#c8c8c8" stroke-width="1.2" fill="none"/><path d="M0.5 0.5V4.5H4.5" stroke="#c8c8c8" stroke-width="1.2" fill="none"/></svg>
<div class="a" style="left:438px;top:238px;width:505px;height:415px;background:#4e4f51"></div>
<div class="a" style="left:931px;top:243px;width:10px;height:394px;background:#424345"></div>
<div class="a" style="left:931px;top:434px;width:10px;height:26px;background:#5a5b5d"></div>
<div class="a" style="left:442px;top:641px;width:484px;height:10px;background:#424345"></div>
<div class="a" style="left:677px;top:641px;width:33px;height:10px;background:#5a5b5d"></div>
<div class="a" style="left:525px;top:275px;width:321px;height:331px;background:#fff"></div>
<div class="a" style="left:525px;top:275px;width:321px;height:331px;border-top:1px dashed #666;border-left:1px dashed #666;"></div>
<div class="a" style="left:525px;top:275px;width:321px;height:331px;border-right:1px dashed #000;border-bottom:1px dashed #000;"></div>
<div class="a dot" style="left:530px;top:287px;width:310px;height:1px;background:repeating-linear-gradient(90deg,#505050 0 1.4px,transparent 1.4px 3px);background-position-x:-2px"></div>
<div class="a dot" style="left:530px;top:417px;width:310px;height:1px;background:repeating-linear-gradient(90deg,#505050 0 1.4px,transparent 1.4px 3px);background-position-x:-2px"></div>
<div class="a dot" style="left:530px;top:287px;width:1px;height:131px;background:repeating-linear-gradient(180deg,#505050 0 1.4px,transparent 1.4px 3px);background-position-y:-2px"></div>
<div class="a dot" style="left:839px;top:287px;width:1px;height:131px;background:repeating-linear-gradient(180deg,#505050 0 1.4px,transparent 1.4px 3px);background-position-y:-2px"></div>
<div class="a" style="left:530px;top:287px;width:152px;height:41px;border:1px solid #a6a6a6;background:#fff"></div>
<svg style="left:537px;top:294px;" width="48" height="28" viewBox="0 0 48 28"><defs><linearGradient id="gs" x1="0" y1="0" x2="0" y2="1"><stop offset="0" stop-color="#3fa845"/><stop offset="0.5" stop-color="#52c558"/><stop offset="1" stop-color="#45b04a"/></linearGradient><filter id="sh" x="-50%" y="-50%" width="200%" height="200%"><feGaussianBlur stdDeviation="1.5"/></filter></defs><rect x="1" y="1" width="44" height="24" rx="12" fill="url(#gs)" stroke="#3a9a3f" stroke-width="0.8"/><circle cx="34" cy="15" r="11" fill="#000" opacity="0.35" filter="url(#sh)"/><circle cx="33.5" cy="13" r="11.5" fill="#c8e6c9"/></svg>
<div class="t" style="left:590px;top:301.69px;font-size:11px;font-size:11px;color:#151515;letter-spacing:-0.1px">Switch 1</div>
<div class="a dot" style="left:687px;top:287px;width:153px;height:1px;background:repeating-linear-gradient(90deg,#505050 0 1.4px,transparent 1.4px 3px);background-position-x:0px"></div>
<div class="a dot" style="left:687px;top:327px;width:153px;height:1px;background:repeating-linear-gradient(90deg,#505050 0 1.4px,transparent 1.4px 3px);background-position-x:0px"></div>
<div class="a dot" style="left:687px;top:287px;width:1px;height:41px;background:repeating-linear-gradient(180deg,#505050 0 1.4px,transparent 1.4px 3px);background-position-y:-2px"></div>
<div class="a dot" style="left:839px;top:287px;width:1px;height:41px;background:repeating-linear-gradient(180deg,#505050 0 1.4px,transparent 1.4px 3px);background-position-y:-2px"></div>
<svg style="left:694px;top:294px;" width="48" height="28" viewBox="0 0 48 28"><rect x="1.5" y="1.5" width="43" height="23" rx="11.5" fill="#fff" stroke="#b8c8b8" stroke-width="1"/><circle cx="13.5" cy="15" r="11" fill="#000" opacity="0.3" filter="url(#sh)"/><circle cx="12.5" cy="13" r="11.5" fill="#c8e6c9"/></svg>
<div class="t" style="left:747px;top:301.69px;font-size:11px;font-size:11px;color:#151515;letter-spacing:-0.1px">Switch 2</div>
<div class="a" style="left:530px;top:332px;width:153px;height:41px;border:1px solid #7a9de0;background:#fff"></div>
<svg style="left:534px;top:336px;" width="32" height="32" viewBox="0 0 32 32"><defs><radialGradient id="gr"><stop offset="0" stop-color="#55c95a"/><stop offset="0.75" stop-color="#4cbb50"/><stop offset="1" stop-color="#3a9e3e"/></radialGradient></defs><circle cx="16" cy="16" r="14.5" fill="#fff" stroke="#c8c0c0" stroke-width="1"/><circle cx="16" cy="16" r="9" fill="url(#gr)"/></svg>
<div class="t" style="left:570.5px;top:346.69px;font-size:11px;font-size:11px;color:#151515;letter-spacing:-0.1px">Radio Button 1</div>
<div class="a dot" style="left:687px;top:332px;width:153px;height:1px;background:repeating-linear-gradient(90deg,#505050 0 1.4px,transparent 1.4px 3px);background-position-x:0px"></div>
<div class="a dot" style="left:687px;top:372px;width:153px;height:1px;background:repeating-linear-gradient(90deg,#505050 0 1.4px,transparent 1.4px 3px);background-position-x:0px"></div>
<div class="a dot" style="left:687px;top:332px;width:1px;height:41px;background:repeating-linear-gradient(180deg,#505050 0 1.4px,transparent 1.4px 3px);background-position-y:-2px"></div>
<div class="a dot" style="left:839px;top:332px;width:1px;height:41px;background:repeating-linear-gradient(180deg,#505050 0 1.4px,transparent 1.4px 3px);background-position-y:-2px"></div>
<svg style="left:691px;top:336px;" width="32" height="32" viewBox="0 0 32 32"><circle cx="16" cy="16" r="14.5" fill="#fff" stroke="#c8c0c0" stroke-width="1"/></svg>
<div class="t" style="left:727px;top:346.69px;font-size:11px;font-size:11px;color:#151515;letter-spacing:-0.1px">Radio Button 2</div>
<div class="a dot" style="left:530px;top:377px;width:139px;height:1px;background:repeating-linear-gradient(90deg,#505050 0 1.4px,transparent 1.4px 3px);background-position-x:-2px"></div>
<div class="a dot" style="left:530px;top:417px;width:139px;height:1px;background:repeating-linear-gradient(90deg,#505050 0 1.4px,transparent 1.4px 3px);background-position-x:-2px"></div>
<div class="a dot" style="left:530px;top:377px;width:1px;height:41px;background:repeating-linear-gradient(180deg,#505050 0 1.4px,transparent 1.4px 3px);background-position-y:-2px"></div>
<div class="a dot" style="left:668px;top:377px;width:1px;height:41px;background:repeating-linear-gradient(180deg,#505050 0 1.4px,transparent 1.4px 3px);background-position-y:-2px"></div>
<svg style="left:535px;top:382px;" width="31" height="31" viewBox="0 0 31 31"><defs><radialGradient id="gc"><stop offset="0" stop-color="#55c95a"/><stop offset="0.8" stop-color="#4cbb50"/><stop offset="1" stop-color="#3a9e3e"/></radialGradient></defs><rect x="0.5" y="0.5" width="29" height="29" rx="2.5" fill="#fff" stroke="#c8c0c0"/><rect x="6" y="6" width="18" height="18" rx="4" fill="url(#gc)"/></svg>
<div class="t" style="left:570px;top:391.69px;font-size:11px;font-size:11px;color:#151515;letter-spacing:-0.1px">Check Box 1</div>
<div class="a dot" style="left:687px;top:377px;width:139px;height:1px;background:repeating-linear-gradient(90deg,#505050 0 1.4px,transparent 1.4px 3px);background-position-x:0px"></div>
<div class="a dot" style="left:687px;top:415px;width:139px;height:1px;background:repeating-linear-gradient(90deg,#505050 0 1.4px,transparent 1.4px 3px);background-position-x:0px"></div>
<div class="a dot" style="left:687px;top:377px;width:1px;height:39px;background:repeating-linear-gradient(180deg,#505050 0 1.4px,transparent 1.4px 3px);background-position-y:-2px"></div>
<div class="a dot" style="left:825px;top:377px;width:1px;height:39px;background:repeating-linear-gradient(180deg,#505050 0 1.4px,transparent 1.4px 3px);background-position-y:-2px"></div>
<svg style="left:692px;top:382px;" width="31" height="31" viewBox="0 0 31 31"><rect x="0.5" y="0.5" width="29" height="29" rx="2.5" fill="#fff" stroke="#c8c0c0"/></svg>
<div class="t" style="left:727px;top:391.69px;font-size:11px;font-size:11px;color:#151515;letter-spacing:-0.1px">Check Box 2</div>
<div class="a dot" style="left:535px;top:437px;width:301px;height:1px;background:repeating-linear-gradient(90deg,#505050 0 1.4px,transparent 1.4px 3px);background-position-x:-1px"></div>
<div class="a dot" style="left:535px;top:477px;width:301px;height:1px;background:repeating-linear-gradient(90deg,#505050 0 1.4px,transparent 1.4px 3px);background-position-x:-1px"></div>
<div class="a dot" style="left:535px;top:437px;width:1px;height:41px;background:repeating-linear-gradient(180deg,#505050 0 1.4px,transparent 1.4px 3px);background-position-y:-2px"></div>
<div class="a dot" style="left:835px;top:437px;width:1px;height:41px;background:repeating-linear-gradient(180deg,#505050 0 1.4px,transparent 1.4px 3px);background-position-y:-2px"></div>
<svg style="left:548px;top:443px;" width="275" height="30" viewBox="0 0 275 30"><defs><linearGradient id="gt" x1="0" y1="0" x2="0" y2="1"><stop offset="0" stop-color="#3a9e3f"/><stop offset="0.5" stop-color="#52c357"/><stop offset="1" stop-color="#4ab24e"/></linearGradient><linearGradient id="gg" x1="0" y1="0" x2="0" y2="1"><stop offset="0" stop-color="#cfcfcf"/><stop offset="0.5" stop-color="#f2f2f2"/><stop offset="1" stop-color="#f6f6f6"/></linearGradient></defs><rect x="2" y="9" width="269" height="10" rx="5" fill="url(#gg)"/><rect x="2" y="9" width="134" height="10" rx="5" fill="url(#gt)"/><circle cx="137" cy="16" r="12" fill="#000" opacity="0.3" filter="url(#sh)"/><circle cx="136" cy="14" r="12" fill="#c8e6c9"/></svg>
<div class="a dot" style="left:582px;top:477px;width:208px;height:1px;background:repeating-linear-gradient(90deg,#505050 0 1.4px,transparent 1.4px 3px);background-position-x:0px"></div>
<div class="a dot" style="left:582px;top:527px;width:208px;height:1px;background:repeating-linear-gradient(90deg,#505050 0 1.4px,transparent 1.4px 3px);background-position-x:0px"></div>
<div class="a dot" style="left:582px;top:477px;width:1px;height:51px;background:repeating-linear-gradient(180deg,#505050 0 1.4px,transparent 1.4px 3px);background-position-y:0px"></div>
<div class="a dot" style="left:789px;top:477px;width:1px;height:51px;background:repeating-linear-gradient(180deg,#505050 0 1.4px,transparent 1.4px 3px);background-position-y:0px"></div>
<div class="a" style="left:592px;top:487px;width:187px;height:30px;background:#c8e6c9;border-radius:4px;box-shadow:0 2px 3px rgba(0,0,0,0.35)"></div>
<div class="t" style="left:485px;width:400px;text-align:center;top:496.69px;font-size:11px;font-size:11px;color:#1a1a1a">Button</div>
<div class="a dot" style="left:530px;top:556px;width:120px;height:1px;background:repeating-linear-gradient(90deg,#505050 0 1.4px,transparent 1.4px 3px);background-position-x:-2px"></div>
<div class="a dot" style="left:530px;top:596px;width:120px;height:1px;background:repeating-linear-gradient(90deg,#505050 0 1.4px,transparent 1.4px 3px);background-position-x:-2px"></div>
<div class="a dot" style="left:530px;top:556px;width:1px;height:41px;background:repeating-linear-gradient(180deg,#505050 0 1.4px,transparent 1.4px 3px);background-position-y:-1px"></div>
<div class="a dot" style="left:649px;top:556px;width:1px;height:41px;background:repeating-linear-gradient(180deg,#505050 0 1.4px,transparent 1.4px 3px);background-position-y:-1px"></div>
<svg style="left:535px;top:561px;" width="31" height="31" viewBox="0 0 31 31"><rect x="0.5" y="0.5" width="29" height="29" rx="2.5" fill="#fff" stroke="#c8c0c0"/><rect x="6" y="6" width="18" height="18" rx="4" fill="url(#gc)"/></svg>
<div class="t" style="left:570px;top:571.69px;font-size:11px;font-size:11px;color:#151515;letter-spacing:-0.1px">enabled</div>
<div class="a" style="left:944px;top:53px;width:335px;height:25px;background:#404244"></div>
<div class="t" style="left:948px;top:61.69px;font-size:11px;">Properties</div>
<svg style="left:1062px;top:64px;" width="8" height="5" viewBox="0 0 8 5"><path d="M0 0H8L4 5Z" fill="#d0d0d0"/></svg>
<div class="a" style="left:1075px;top:58px;width:1px;height:16px;background:#5e5f61"></div>
<svg style="left:1237px;top:61px;" width="15" height="12" viewBox="0 0 15 12"><rect x="0.5" y="0.5" width="7" height="11" fill="none" stroke="#c8c8c8"/><path d="M0.5 5.5H7.5M9 5.5H14M11.5 3V8" stroke="#c8c8c8"/></svg>
<svg style="left:1260px;top:61px;" width="10" height="12" viewBox="0 0 10 12"><rect x="0.5" y="0.5" width="9" height="11" fill="none" stroke="#c8c8c8"/><rect x="7" y="1" width="2.5" height="10" fill="#c8c8c8"/><path d="M5.5 3.5V8.5L3 6Z" fill="#c8c8c8"/></svg>
<div class="a" style="left:944px;top:78px;width:325px;height:575px;background:#505153"></div>
<div class="a" style="left:1269px;top:78px;width:10px;height:515px;background:#5a5b5d"></div>
<div class="a" style="left:1269px;top:593px;width:10px;height:60px;background:#4b4c4e"></div>
<div class="a" style="left:944px;top:78px;width:325px;height:17px;background:#404244"></div>
<svg style="left:948px;top:84.5px;" width="8" height="5" viewBox="0 0 8 5"><path d="M0 0H8L4 5Z" fill="#c8c8c8"/></svg>
<div class="t" style="left:966px;top:81.01px;font-size:11.8px;font-weight:bold;color:#fff">Type</div>
<div class="t" style="left:951px;top:101.11px;font-size:10.5px;color:#e8e8e8">Type</div>
<div class="t" style="left:1054.5px;top:101.11px;font-size:10.5px;color:#e8e8e8">RadioButton</div>
<div class="t" style="left:951px;top:124.11px;font-size:10.5px;color:#e8e8e8">id</div>
<div class="a" style="left:1055px;top:116px;width:188px;height:24px;background:#262729"></div>
<div class="t" style="left:1070px;top:123.69px;font-size:11px;color:#f0f0f0">radioButton</div>
<svg style="left:1250px;top:122px;" width="12" height="13" viewBox="0 0 12 13"><rect x="0.5" y="0.5" width="11" height="12" fill="none" stroke="#c8c8c8"/><path d="M2 3.5H6M2 5.5H6M2 7.5H6M2 9.5H6" stroke="#c8c8c8" stroke-width="0.7"/></svg>
<div class="a" style="left:944px;top:144px;width:325px;height:18px;background:#404244"></div>
<svg style="left:948px;top:150.5px;" width="8" height="5" viewBox="0 0 8 5"><path d="M0 0H8L4 5Z" fill="#c8c8c8"/></svg>
<div class="t" style="left:966px;top:148.01px;font-size:11.8px;font-weight:bold;color:#fff">Geometry</div>
<div class="t" style="left:951px;top:174.11px;font-size:10.5px;color:#e8e8e8">Position</div>
<div class="t" style="left:1054px;top:173.69px;font-size:11px;color:#e8e8e8">X</div>
<div class="a" style="left:1071px;top:166px;width:64px;height:23px;background:#262729"></div>
<svg style="left:1076px;top:175px;" width="6" height="6" viewBox="0 0 6 6"><circle cx="3" cy="3" r="2.1" fill="none" stroke="#d0d0d0" stroke-width="1"/></svg>
<div class="t" style="left:716px;width:400px;text-align:right;top:174.77px;font-size:11.5px;color:#f0f0f0">0</div>
<svg style="left:1121px;top:170px;" width="9" height="15" viewBox="0 0 9 15"><path d="M0.5 4.5H8.5L4.5 0.5Z" fill="#c8c8c8"/><path d="M0.5 10.5H8.5L4.5 14.5Z" fill="#c8c8c8"/></svg>
<div class="t" style="left:1146px;top:173.69px;font-size:11px;color:#e8e8e8">Y</div>
<div class="a" style="left:1163px;top:166px;width:64px;height:23px;background:#262729"></div>
<svg style="left:1168px;top:175px;" width="6" height="6" viewBox="0 0 6 6"><circle cx="3" cy="3" r="2.1" fill="none" stroke="#d0d0d0" stroke-width="1"/></svg>
<div class="t" style="left:808px;width:400px;text-align:right;top:174.77px;font-size:11.5px;color:#f0f0f0">45</div>
<svg style="left:1213px;top:170px;" width="9" height="15" viewBox="0 0 9 15"><path d="M0.5 4.5H8.5L4.5 0.5Z" fill="#c8c8c8"/><path d="M0.5 10.5H8.5L4.5 14.5Z" fill="#c8c8c8"/></svg>
<div class="t" style="left:951px;top:202.11px;font-size:10.5px;color:#e8e8e8">Size</div>
<div class="t" style="left:1054px;top:201.69px;font-size:11px;color:#e8e8e8">W</div>
<div class="a" style="left:1071px;top:194px;width:64px;height:23px;background:#262729"></div>
<svg style="left:1076px;top:203px;" width="6" height="6" viewBox="0 0 6 6"><circle cx="3" cy="3" r="2.1" fill="none" stroke="#d0d0d0" stroke-width="1"/></svg>
<div class="t" style="left:716px;width:400px;text-align:right;top:202.77px;font-size:11.5px;color:#f0f0f0">152</div>
<svg style="left:1121px;top:198px;" width="9" height="15" viewBox="0 0 9 15"><path d="M0.5 4.5H8.5L4.5 0.5Z" fill="#c8c8c8"/><path d="M0.5 10.5H8.5L4.5 14.5Z" fill="#c8c8c8"/></svg>
<div class="t" style="left:1146px;top:201.69px;font-size:11px;color:#e8e8e8">H</div>
<div class="a" style="left:1163px;top:194px;width:64px;height:23px;background:#262729"></div>
<svg style="left:1168px;top:203px;" width="6" height="6" viewBox="0 0 6 6"><circle cx="3" cy="3" r="2.1" fill="none" stroke="#d0d0d0" stroke-width="1"/></svg>
<div class="t" style="left:808px;width:400px;text-align:right;top:202.77px;font-size:11.5px;color:#f0f0f0">40</div>
<svg style="left:1213px;top:198px;" width="9" height="15" viewBox="0 0 9 15"><path d="M0.5 4.5H8.5L4.5 0.5Z" fill="#c8c8c8"/><path d="M0.5 10.5H8.5L4.5 14.5Z" fill="#c8c8c8"/></svg>
<div class="a" style="left:944px;top:222px;width:325px;height:18px;background:#404244"></div>
<svg style="left:948px;top:228.5px;" width="8" height="5" viewBox="0 0 8 5"><path d="M0 0H8L4 5Z" fill="#c8c8c8"/></svg>
<div class="t" style="left:966px;top:226.01px;font-size:11.8px;font-weight:bold;color:#fff">Visibility</div>
<div class="t" style="left:951px;top:248.11px;font-size:10.5px;color:#e8e8e8">Visibility</div>
<div class="a" style="left:1056px;top:245px;width:14px;height:14px;background:#2e2f30"></div>
<svg style="left:1056px;top:245px;" width="15" height="15" viewBox="0 0 15 15"><path d="M4 8.3 L6.3 7.2 L7.6 10 Q10 4.8 14.5 1.2 L14.8 1.8 Q10.8 6.5 8.2 13.5 L6.8 13.5 Z" fill="#d0d0d0"/></svg>
<svg style="left:1080px;top:249px;" width="6" height="6" viewBox="0 0 6 6"><circle cx="3" cy="3" r="2.1" fill="none" stroke="#d0d0d0" stroke-width="1"/></svg>
<div class="t" style="left:1094.5px;top:248.11px;font-size:10.5px;color:#e8e8e8">Is Visible</div>
<div class="a" style="left:1155px;top:245px;width:14px;height:14px;background:#2e2f30"></div>
<svg style="left:1179px;top:249px;" width="6" height="6" viewBox="0 0 6 6"><circle cx="3" cy="3" r="2.1" fill="none" stroke="#d0d0d0" stroke-width="1"/></svg>
<div class="t" style="left:1193px;top:248.11px;font-size:10.5px;color:#e8e8e8">Clip</div>
<div class="t" style="left:951px;top:272.11px;font-size:10.5px;color:#e8e8e8">Opacity</div>
<div class="a" style="left:1055px;top:264px;width:64px;height:23px;background:#262729"></div>
<svg style="left:1060px;top:273px;" width="6" height="6" viewBox="0 0 6 6"><circle cx="3" cy="3" r="2.1" fill="none" stroke="#d0d0d0" stroke-width="1"/></svg>
<div class="t" style="left:700px;width:400px;text-align:right;top:272.77px;font-size:11.5px;color:#f0f0f0">1,00</div>
<svg style="left:1105px;top:268px;" width="9" height="15" viewBox="0 0 9 15"><path d="M0.5 4.5H8.5L4.5 0.5Z" fill="#c8c8c8"/><path d="M0.5 10.5H8.5L4.5 14.5Z" fill="#c8c8c8"/></svg>
<div class="a" style="left:944px;top:296px;width:325px;height:24px;background:#3c3d3f"></div>
<div class="a" style="left:944px;top:296px;width:114px;height:24px;background:#fff"></div>
<div class="a" style="left:944px;top:320px;width:325px;height:4px;background:#fff"></div>
<div class="t" style="left:801px;width:400px;text-align:center;top:303.27px;font-size:11.5px;font-weight:bold;color:#3a3a3a">RadioButton</div>
<div class="t" style="left:913px;width:400px;text-align:center;top:303.27px;font-size:11.5px;font-weight:bold;color:#fff">Layout</div>
<div class="t" style="left:1027px;width:400px;text-align:center;top:303.27px;font-size:11.5px;font-weight:bold;color:#fff">Advanced</div>
<div class="a" style="left:944px;top:324px;width:325px;height:18px;background:#404244"></div>
<svg style="left:948px;top:330.5px;" width="8" height="5" viewBox="0 0 8 5"><path d="M0 0H8L4 5Z" fill="#c8c8c8"/></svg>
<div class="t" style="left:966px;top:328.01px;font-size:11.8px;font-weight:bold;color:#fff">Radio Button</div>
<div class="t" style="left:951px;top:354.11px;font-size:10.5px;color:#e8e8e8">Text</div>
<div class="a" style="left:1055px;top:346px;width:208px;height:24px;background:#262729"></div>
<svg style="left:1060px;top:355px;" width="6" height="6" viewBox="0 0 6 6"><circle cx="3" cy="3" r="2.1" fill="none" stroke="#d0d0d0" stroke-width="1"/></svg>
<div class="t" style="left:1070px;top:353.69px;font-size:11px;color:#4da6e0">Radio Button 1</div>
<div class="a" style="left:1245px;top:351px;width:15px;height:15px;background:#262729;border:1px solid #3a3b3d"></div>
<div class="t" style="left:1052.5px;width:400px;text-align:center;top:352.69px;font-size:11px;font-family:Liberation Serif;font-style:italic;font-weight:bold;color:#b0b0b0">tr</div>
<div class="t" style="left:951px;top:377.61px;font-size:10.5px;color:#e8e8e8">Highlighted</div>
<div class="a" style="left:1056px;top:375px;width:14px;height:14px;background:#2e2f30"></div>
<svg style="left:1080.5px;top:379px;" width="6" height="6" viewBox="0 0 6 6"><circle cx="3" cy="3" r="2.1" fill="none" stroke="#d0d0d0" stroke-width="1"/></svg>
<div class="t" style="left:951px;top:397.61px;font-size:10.5px;color:#e8e8e8">Checkable</div>
<div class="a" style="left:1056px;top:395px;width:14px;height:14px;background:#2e2f30"></div>
<svg style="left:1056px;top:395px;" width="15" height="15" viewBox="0 0 15 15"><path d="M4 8.3 L6.3 7.2 L7.6 10 Q10 4.8 14.5 1.2 L14.8 1.8 Q10.8 6.5 8.2 13.5 L6.8 13.5 Z" fill="#d0d0d0"/></svg>
<svg style="left:1080.5px;top:399px;" width="6" height="6" viewBox="0 0 6 6"><circle cx="3" cy="3" r="2.1" fill="none" stroke="#d0d0d0" stroke-width="1"/></svg>
<div class="t" style="left:1095px;top:397.61px;font-size:10.5px;color:#e8e8e8">true</div>
<div class="t" style="left:951px;top:417.61px;font-size:10.5px;color:#e8e8e8">Checked</div>
<div class="a" style="left:1056px;top:415px;width:14px;height:14px;background:#2e2f30"></div>
<svg style="left:1056px;top:415px;" width="15" height="15" viewBox="0 0 15 15"><path d="M4 8.3 L6.3 7.2 L7.6 10 Q10 4.8 14.5 1.2 L14.8 1.8 Q10.8 6.5 8.2 13.5 L6.8 13.5 Z" fill="#d0d0d0"/></svg>
<svg style="left:1080.5px;top:419px;" width="6" height="6" viewBox="0 0 6 6"><circle cx="3" cy="3" r="2.1" fill="none" stroke="#d0d0d0" stroke-width="1"/></svg>
<div class="t" style="left:1095px;top:417.61px;font-size:10.5px;color:#4da6e0">true</div>
<div class="t" style="left:951px;top:437.61px;font-size:10.5px;color:#e8e8e8">Exclusive</div>
<div class="a" style="left:1056px;top:435px;width:14px;height:14px;background:#2e2f30"></div>
<svg style="left:1080.5px;top:439px;" width="6" height="6" viewBox="0 0 6 6"><circle cx="3" cy="3" r="2.1" fill="none" stroke="#d0d0d0" stroke-width="1"/></svg>
<div class="t" style="left:1095px;top:437.61px;font-size:10.5px;color:#e8e8e8">false</div>
<div class="t" style="left:951px;top:457.61px;font-size:10.5px;color:#e8e8e8">Repeat</div>
<div class="a" style="left:1056px;top:455px;width:14px;height:14px;background:#2e2f30"></div>
<svg style="left:1080.5px;top:459px;" width="6" height="6" viewBox="0 0 6 6"><circle cx="3" cy="3" r="2.1" fill="none" stroke="#d0d0d0" stroke-width="1"/></svg>
<div class="a" style="left:944px;top:474px;width:325px;height:18px;background:#404244"></div>
<svg style="left:948px;top:480.5px;" width="8" height="5" viewBox="0 0 8 5"><path d="M0 0H8L4 5Z" fill="#c8c8c8"/></svg>
<div class="t" style="left:966px;top:478.01px;font-size:11.8px;font-weight:bold;color:#fff">Control</div>
<div class="t" style="left:951px;top:500.11px;font-size:10.5px;color:#e8e8e8">Enabled</div>
<div class="a" style="left:1056px;top:497px;width:14px;height:14px;background:#2e2f30"></div>
<svg style="left:1056px;top:497px;" width="15" height="15" viewBox="0 0 15 15"><path d="M4 8.3 L6.3 7.2 L7.6 10 Q10 4.8 14.5 1.2 L14.8 1.8 Q10.8 6.5 8.2 13.5 L6.8 13.5 Z" fill="#d0d0d0"/></svg>
<svg style="left:1080.5px;top:501px;" width="6" height="6" viewBox="0 0 6 6"><circle cx="3" cy="3" r="2.1" fill="none" stroke="#d0d0d0" stroke-width="1"/></svg>
<div class="t" style="left:1095px;top:500.11px;font-size:10.5px;color:#e8e8e8">true</div>
<div class="t" style="left:951px;top:524.11px;font-size:10.5px;color:#e8e8e8">Spacing</div>
<div class="a" style="left:1055px;top:516px;width:208px;height:24px;background:#262729"></div>
<svg style="left:1060px;top:525px;" width="6" height="6" viewBox="0 0 6 6"><circle cx="3" cy="3" r="2.1" fill="none" stroke="#d0d0d0" stroke-width="1"/></svg>
<div class="t" style="left:844px;width:400px;text-align:right;top:524.77px;font-size:11.5px;color:#f0f0f0">0</div>
<svg style="left:1249px;top:520px;" width="9" height="15" viewBox="0 0 9 15"><path d="M0.5 4.5H8.5L4.5 0.5Z" fill="#c8c8c8"/><path d="M0.5 10.5H8.5L4.5 14.5Z" fill="#c8c8c8"/></svg>
<div class="a" style="left:944px;top:544px;width:325px;height:18px;background:#404244"></div>
<svg style="left:948px;top:550.5px;" width="8" height="5" viewBox="0 0 8 5"><path d="M0 0H8L4 5Z" fill="#c8c8c8"/></svg>
<div class="t" style="left:966px;top:548.01px;font-size:11.8px;font-weight:bold;color:#fff">Padding</div>
<div class="t" style="left:951px;top:574.11px;font-size:10.5px;color:#e8e8e8">Vertical</div>
<div class="t" style="left:1054px;top:574.11px;font-size:10.5px;color:#e8e8e8">Top</div>
<div class="a" style="left:1101px;top:566px;width:52px;height:23px;background:#262729"></div>
<svg style="left:1106px;top:575px;" width="6" height="6" viewBox="0 0 6 6"><circle cx="3" cy="3" r="2.1" fill="none" stroke="#d0d0d0" stroke-width="1"/></svg>
<div class="t" style="left:734px;width:400px;text-align:right;top:574.77px;font-size:11.5px;color:#f0f0f0">0</div>
<svg style="left:1139px;top:570px;" width="9" height="15" viewBox="0 0 9 15"><path d="M0.5 4.5H8.5L4.5 0.5Z" fill="#c8c8c8"/><path d="M0.5 10.5H8.5L4.5 14.5Z" fill="#c8c8c8"/></svg>
<div class="t" style="left:1164px;top:574.11px;font-size:10.5px;color:#e8e8e8">Bottom</div>
<div class="a" style="left:1211px;top:566px;width:52px;height:23px;background:#262729"></div>
<svg style="left:1216px;top:575px;" width="6" height="6" viewBox="0 0 6 6"><circle cx="3" cy="3" r="2.1" fill="none" stroke="#d0d0d0" stroke-width="1"/></svg>
<div class="t" style="left:844px;width:400px;text-align:right;top:574.77px;font-size:11.5px;color:#f0f0f0">0</div>
<svg style="left:1249px;top:570px;" width="9" height="15" viewBox="0 0 9 15"><path d="M0.5 4.5H8.5L4.5 0.5Z" fill="#c8c8c8"/><path d="M0.5 10.5H8.5L4.5 14.5Z" fill="#c8c8c8"/></svg>
<div class="t" style="left:951px;top:602.11px;font-size:10.5px;color:#e8e8e8">Horizontal</div>
<div class="t" style="left:1054px;top:602.11px;font-size:10.5px;color:#e8e8e8">Left</div>
<div class="a" style="left:1101px;top:594px;width:52px;height:23px;background:#262729"></div>
<svg style="left:1106px;top:603px;" width="6" height="6" viewBox="0 0 6 6"><circle cx="3" cy="3" r="2.1" fill="none" stroke="#d0d0d0" stroke-width="1"/></svg>
<div class="t" style="left:734px;width:400px;text-align:right;top:602.77px;font-size:11.5px;color:#f0f0f0">0</div>
<svg style="left:1139px;top:598px;" width="9" height="15" viewBox="0 0 9 15"><path d="M0.5 4.5H8.5L4.5 0.5Z" fill="#c8c8c8"/><path d="M0.5 10.5H8.5L4.5 14.5Z" fill="#c8c8c8"/></svg>
<div class="t" style="left:1164px;top:602.11px;font-size:10.5px;color:#e8e8e8">Right</div>
<div class="a" style="left:1211px;top:594px;width:52px;height:23px;background:#262729"></div>
<svg style="left:1216px;top:603px;" width="6" height="6" viewBox="0 0 6 6"><circle cx="3" cy="3" r="2.1" fill="none" stroke="#d0d0d0" stroke-width="1"/></svg>
<div class="t" style="left:844px;width:400px;text-align:right;top:602.77px;font-size:11.5px;color:#f0f0f0">0</div>
<svg style="left:1249px;top:598px;" width="9" height="15" viewBox="0 0 9 15"><path d="M0.5 4.5H8.5L4.5 0.5Z" fill="#c8c8c8"/><path d="M0.5 10.5H8.5L4.5 14.5Z" fill="#c8c8c8"/></svg>
<div class="t" style="left:951px;top:630.11px;font-size:10.5px;color:#e8e8e8">Padding</div>
<div class="a" style="left:1055px;top:622px;width:208px;height:24px;background:#262729"></div>
<svg style="left:1060px;top:631px;" width="6" height="6" viewBox="0 0 6 6"><circle cx="3" cy="3" r="2.1" fill="none" stroke="#d0d0d0" stroke-width="1"/></svg>
<div class="t" style="left:844px;width:400px;text-align:right;top:630.77px;font-size:11.5px;color:#f0f0f0">0</div>
<svg style="left:1249px;top:626px;" width="9" height="15" viewBox="0 0 9 15"><path d="M0.5 4.5H8.5L4.5 0.5Z" fill="#c8c8c8"/><path d="M0.5 10.5H8.5L4.5 14.5Z" fill="#c8c8c8"/></svg>
<div class="a" style="left:944px;top:643px;width:325px;height:10px;background:#4b4c4e"></div>
<div class="a" style="left:944px;top:643px;width:314px;height:10px;background:#5a5b5d"></div>
<div class="a" style="left:943px;top:53px;width:1px;height:600px;background:#2b2c2e"></div>
<div class="a" style="left:72px;top:653px;width:1207px;height:26px;background:#404244"></div>
<svg style="left:79px;top:661px;" width="12" height="12" viewBox="0 0 12 12"><rect x="0.5" y="0.5" width="11" height="11" fill="none" stroke="#c8c8c8"/><rect x="1" y="1" width="4" height="10" fill="#c8c8c8"/></svg>
<div class="a" style="left:103px;top:656px;width:200px;height:21px;background:#fff"></div>
<svg style="left:109px;top:660px;" width="14" height="13" viewBox="0 0 14 13"><circle cx="8" cy="5" r="3.8" fill="none" stroke="#666" stroke-width="1.3"/><path d="M5.5 7.5L1 12" stroke="#666" stroke-width="1.6"/><path d="M10 10H14L12 12Z" fill="#666"/></svg>
<div class="t" style="left:131px;top:660.84px;font-size:12px;color:#6d6d6d">Type to locate (Ctrl+K)</div>
<div class="a" style="left:306px;top:656px;width:1px;height:20px;background:#5e5f61"></div>
<div class="t" style="left:316px;top:662.03px;font-size:10.6px;color:#e8e8e8">1</div>
<div class="t" style="left:329.5px;top:662.03px;font-size:10.6px;color:#e8e8e8">Issues</div>
<div class="a" style="left:362px;top:658px;width:17px;height:15px;border-radius:7px;background:#8c8c8c"></div>
<div class="t" style="left:171px;width:400px;text-align:center;top:661.69px;font-size:11px;font-weight:bold;color:#fff">2</div>
<div class="t" style="left:395px;top:662.03px;font-size:10.6px;color:#e8e8e8">3</div>
<div class="t" style="left:409px;top:662.03px;font-size:10.6px;color:#e8e8e8">Application Output</div>
<div class="t" style="left:515px;top:662.03px;font-size:10.6px;color:#e8e8e8">4</div>
<div class="t" style="left:528.5px;top:662.03px;font-size:10.6px;color:#e8e8e8">Compile Output</div>
<div class="t" style="left:619px;top:662.03px;font-size:10.6px;color:#e8e8e8">6</div>
<div class="t" style="left:633.5px;top:662.03px;font-size:10.6px;color:#e8e8e8">General Messages</div>
<svg style="left:740px;top:662px;" width="8" height="10" viewBox="0 0 8 10"><path d="M0 4H8L4 0Z" fill="#c0c0c0"/><path d="M0 6H8L4 10Z" fill="#c0c0c0"/></svg>
<svg style="left:1250px;top:664px;" width="9" height="5" viewBox="0 0 9 5"><path d="M0 5H9L4.5 0Z" fill="#d0d0d0"/></svg>
<svg style="left:1268px;top:668px;" width="10" height="10" viewBox="0 0 10 10"><path d="M9.5 2L2 9.5M9.5 5L5 9.5M9.5 8L8 9.5" stroke="#5e5f61" stroke-width="0.8"/></svg></body></html>
